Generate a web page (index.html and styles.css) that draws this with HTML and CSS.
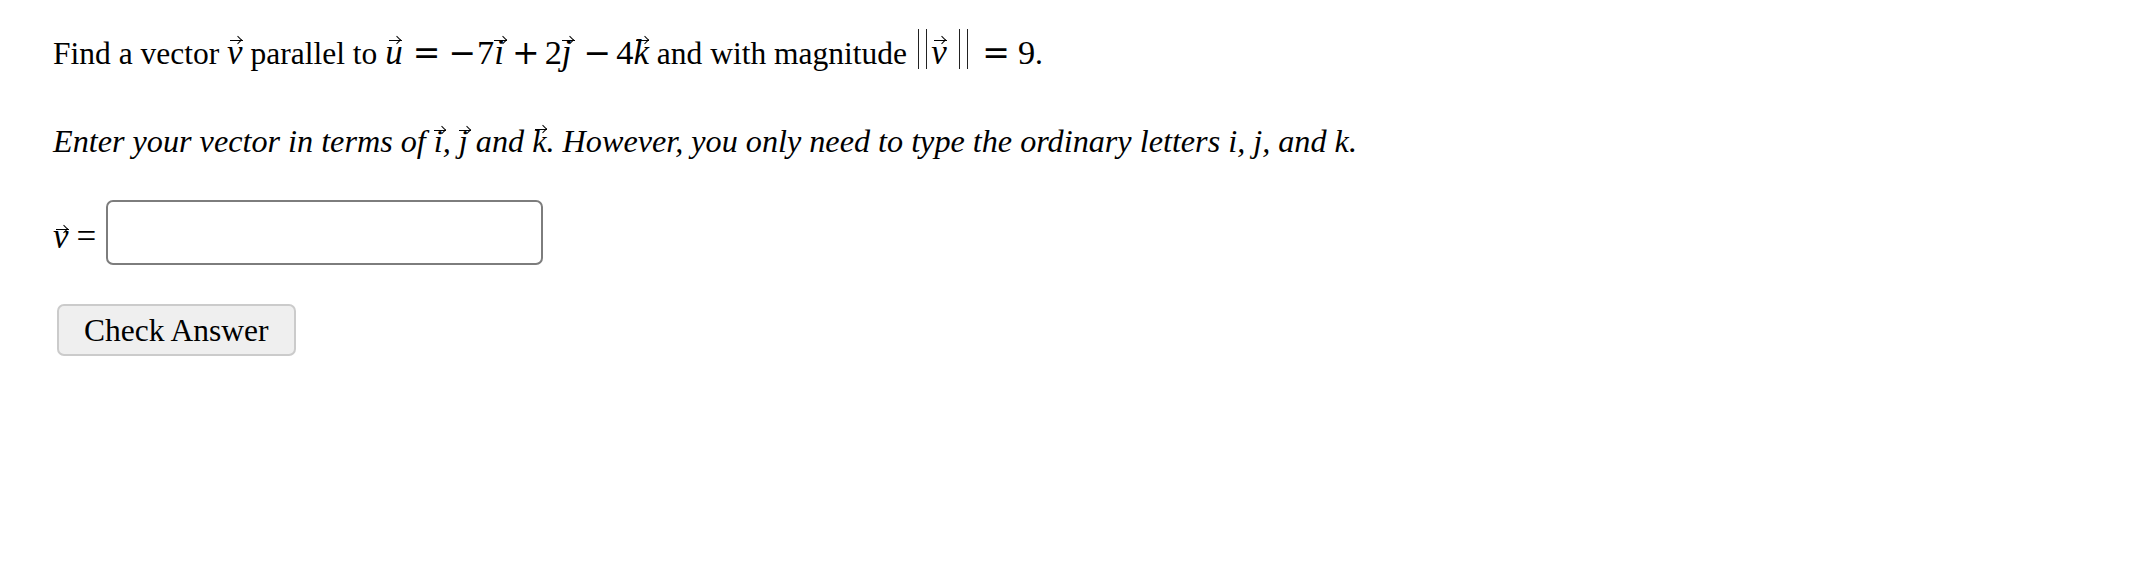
FILE: index.html
```html
<!DOCTYPE html>
<html lang="en">
<head>
<meta charset="utf-8">
<title>Vector problem</title>
<link rel="stylesheet" href="styles.css">
</head>
<body>
<div class="page">
  <p class="q">Find a vector <span class="m"><span class="vec mi">v</span></span> parallel to <span class="m"><span class="vec mi">u</span><span class="rel">=</span><span class="un">−</span><span class="mn">7</span><span class="vec mi vi">i</span><span class="bin">+</span><span class="mn">2</span><span class="vec mi vj">j</span><span class="bin">−</span><span class="mn">4</span><span class="vec mi">k</span></span> and with magnitude <span class="m norm"><span class="bar"></span><span class="bar"></span><span class="vec mi">v</span><span class="bar b3"></span><span class="bar"></span><span class="rel">=</span><span class="mn">9</span></span>.</p>
  <p class="instr">Enter your vector in terms of <span class="vec ti">i</span>, <span class="vec tj">j</span> and <span class="vec tk">k</span>. However, you only need to type the ordinary letters i, j, and k.</p>
  <div class="answer">
    <span class="label"><span class="vec av">v</span><span class="aeq">=</span></span>
    <input class="field" type="text" aria-label="v">
  </div>
  <button class="check" type="button">Check Answer</button>
</div>
</body>
</html>
```
FILE: styles.css
```css
body {
  margin: 0;
  background: #ffffff;
  color: #000000;
}

.page {
  padding: 29px 0 0 53px;
  font-family: "Liberation Serif", "Times New Roman", serif;
  font-size: 31.5px;
  line-height: 36px;
}

.q {
  margin: 0;
}

.instr {
  margin: 51px 0 0;
  font-style: italic;
  font-size: 32.2px;
}

.m {
  line-height: 0;
  white-space: nowrap;
}

.mi {
  font-family: "Liberation Serif", serif;
  font-style: italic;
  font-size: 35px;
}

.mn {
  font-family: "Liberation Serif", serif;
  font-size: 34.4px;
}

.rel,
.bin,
.un {
  font-family: "DejaVu Serif", serif;
  font-size: 33px;
}

.rel {
  margin: 0 8px 0 10px;
}

.bin {
  margin: 0 5px 0 8px;
}

.un {
  margin-right: 1px;
}

.vj {
  margin-right: 4px;
}

/* vector arrows */
.vec {
  position: relative;
  --ax: 1.5px;
  --ay: 6.5px;
  --aw: 13px;
}

.vec::before {
  content: "";
  position: absolute;
  left: calc(50% - var(--aw) / 2 + var(--ax));
  top: var(--ay);
  width: var(--aw);
  height: 1.7px;
  background: #000;
}

.vec::after {
  content: "";
  position: absolute;
  left: calc(50% - var(--aw) / 2 + var(--ax) + var(--aw) - 7.6px);
  top: calc(var(--ay) - 2.4px);
  width: 4.8px;
  height: 4.8px;
  border-top: 1.7px solid #000;
  border-right: 1.7px solid #000;
  transform: rotate(45deg);
}

.ti,
.tj,
.tk {
  --ay: 6.5px;
  --ax: 2px;
  --aw: 12px;
}

.tk {
  --ay: 5.5px;
}

.norm .bar {
  display: inline-block;
  width: 1.2px;
  height: 40px;
  background: #222;
  vertical-align: -5px;
  margin: 0 4px 0 3px;
}

.norm .bar.b3 {
  margin-left: 12px;
}

.answer {
  display: flex;
  align-items: center;
  margin-top: 41px;
}

.label {
  display: inline-flex;
  align-items: baseline;
  margin-right: 10px;
  line-height: 36px;
  padding-top: 8px;
}

.av {
  font-family: "Liberation Serif", serif;
  font-style: italic;
  font-size: 35px;
  --ay: 10px;
}

.aeq {
  font-family: "Liberation Serif", serif;
  font-size: 35px;
  margin-left: 8px;
}

.field {
  box-sizing: border-box;
  width: 437px;
  height: 65px;
  border: 2px solid #7d7d7d;
  border-radius: 7px;
  background: #ffffff;
  font: inherit;
  padding: 0 10px;
}

.check {
  display: block;
  box-sizing: border-box;
  height: 52px;
  margin: 39px 0 0 4px;
  padding: 1px 25px 0;
  border: 2px solid #cbcbcb;
  border-radius: 7px;
  background: #efefef;
  color: #000000;
  font-family: "Liberation Serif", "Times New Roman", serif;
  font-size: 31.5px;
  line-height: 46px;
}
```
